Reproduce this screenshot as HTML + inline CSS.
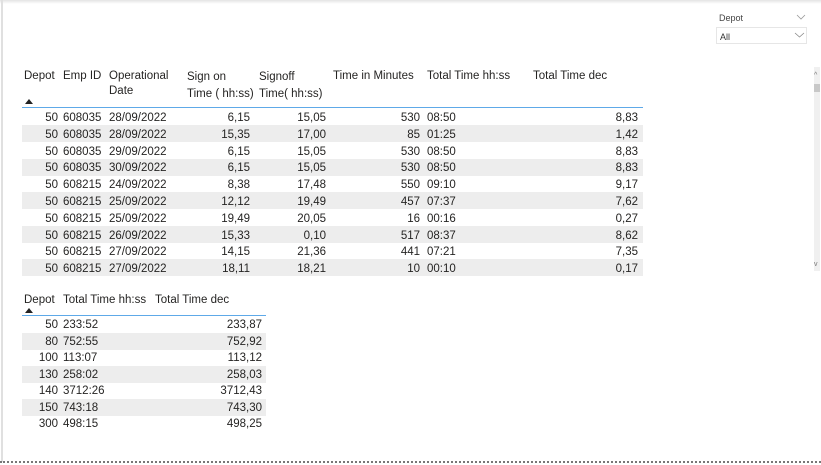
<!DOCTYPE html>
<html><head><meta charset="utf-8"><style>
*{margin:0;padding:0;box-sizing:border-box}
body{width:821px;height:465px;background:#fff;position:relative;overflow:hidden;font-family:"Segoe UI","Liberation Sans",sans-serif;font-size:11.5px;color:#252423}
.a{position:absolute;white-space:nowrap;line-height:14px}
.r{text-align:right}
.g{position:absolute;background:#ededed}
.tri{position:absolute;width:0;height:0;border-left:4px solid transparent;border-right:4px solid transparent;border-bottom:5px solid #222}
</style></head><body>
<div style="position:absolute;left:0;top:0;width:821px;height:4px;background:linear-gradient(#e4e4e4,#fff)"></div>
<div style="position:absolute;left:1px;top:0;width:2px;height:462px;background:#e0e0e0"></div>
<div style="position:absolute;left:0;top:461px;width:821px;height:0;border-top:2px dotted #777"></div>

<!-- slicer -->
<div class="a" style="left:719px;top:11px;font-size:9px;color:#444">Depot</div>
<svg style="position:absolute;left:796px;top:14px" width="10" height="6"><path d="M1 1L5 5L9 1" fill="none" stroke="#999" stroke-width="0.8"/></svg>
<div style="position:absolute;left:716px;top:27px;width:91px;height:17px;border:1px solid #e6e6e6"></div>
<div class="a" style="left:720px;top:30px;font-size:9px;color:#333">All</div>
<svg style="position:absolute;left:794px;top:32px" width="11" height="6"><path d="M1 1L5.5 5L10 1" fill="none" stroke="#888" stroke-width="0.8"/></svg>

<!-- scrollbar -->
<div style="position:absolute;left:814px;top:67px;width:6px;height:204px;background:#f0f0f0"></div>
<div style="position:absolute;left:814px;top:84px;width:6px;height:8px;background:#c8c8c8"></div>
<div class="a" style="left:814px;top:69px;font-size:7px;color:#777">^</div>
<div class="a" style="left:814px;top:258px;font-size:7px;color:#777">v</div>

<!-- table 1 header -->
<div class="a" style="left:24px;top:69px">Depot</div>
<div class="a" style="left:63px;top:69px">Emp ID</div>
<div class="a" style="left:109px;top:69px">Operational<br><span style="line-height:17px">Date</span></div>
<div class="a" style="left:187px;top:69px;line-height:17px">Sign on<br>Time ( hh:ss)</div>
<div class="a" style="left:259px;top:69px;line-height:17px">Signoff<br>Time( hh:ss)</div>
<div class="a" style="left:333px;top:69px">Time in Minutes</div>
<div class="a" style="left:427px;top:69px">Total Time hh:ss</div>
<div class="a" style="left:533px;top:69px">Total Time dec</div>
<div class="tri" style="left:25px;top:99px"></div>
<div style="position:absolute;left:22px;top:107px;width:621px;height:1px;background:#5ea9e8"></div>

<div class="g" style="left:22px;top:125px;width:621px;height:17px"></div>
<div class="g" style="left:22px;top:159px;width:621px;height:17px"></div>
<div class="g" style="left:22px;top:192px;width:621px;height:17px"></div>
<div class="g" style="left:22px;top:226px;width:621px;height:17px"></div>
<div class="g" style="left:22px;top:259px;width:621px;height:17px"></div>

<div class="a r" style="left:0;width:58px;top:110px;line-height:16.8px">50<br>50<br>50<br>50<br>50<br>50<br>50<br>50<br>50<br>50</div>
<div class="a" style="left:63px;top:110px;line-height:16.8px">608035<br>608035<br>608035<br>608035<br>608215<br>608215<br>608215<br>608215<br>608215<br>608215</div>
<div class="a" style="left:109px;top:110px;line-height:16.8px">28/09/2022<br>28/09/2022<br>29/09/2022<br>30/09/2022<br>24/09/2022<br>25/09/2022<br>25/09/2022<br>26/09/2022<br>27/09/2022<br>27/09/2022</div>
<div class="a r" style="left:180px;width:70px;top:110px;line-height:16.8px">6,15<br>15,35<br>6,15<br>6,15<br>8,38<br>12,12<br>19,49<br>15,33<br>14,15<br>18,11</div>
<div class="a r" style="left:256px;width:70px;top:110px;line-height:16.8px">15,05<br>17,00<br>15,05<br>15,05<br>17,48<br>19,49<br>20,05<br>0,10<br>21,36<br>18,21</div>
<div class="a r" style="left:350px;width:70px;top:110px;line-height:16.8px">530<br>85<br>530<br>530<br>550<br>457<br>16<br>517<br>441<br>10</div>
<div class="a" style="left:427px;top:110px;line-height:16.8px">08:50<br>01:25<br>08:50<br>08:50<br>09:10<br>07:37<br>00:16<br>08:37<br>07:21<br>00:10</div>
<div class="a r" style="left:560px;width:78px;top:110px;line-height:16.8px">8,83<br>1,42<br>8,83<br>8,83<br>9,17<br>7,62<br>0,27<br>8,62<br>7,35<br>0,17</div>

<!-- table 2 -->
<div class="a" style="left:24px;top:293px">Depot</div>
<div class="a" style="left:63px;top:293px">Total Time hh:ss</div>
<div class="a" style="left:155px;top:293px">Total Time dec</div>
<div class="tri" style="left:25px;top:308px"></div>
<div style="position:absolute;left:22px;top:315px;width:244px;height:1px;background:#5ea9e8"></div>
<div class="g" style="left:22px;top:333px;width:244px;height:17px"></div>
<div class="g" style="left:22px;top:366px;width:244px;height:17px"></div>
<div class="g" style="left:22px;top:399px;width:244px;height:17px"></div>
<div class="a r" style="left:0;width:58px;top:317px;line-height:16.5px">50<br>80<br>100<br>130<br>140<br>150<br>300</div>
<div class="a" style="left:63px;top:317px;line-height:16.5px">233:52<br>752:55<br>113:07<br>258:02<br>3712:26<br>743:18<br>498:15</div>
<div class="a r" style="left:180px;width:82px;top:317px;line-height:16.5px">233,87<br>752,92<br>113,12<br>258,03<br>3712,43<br>743,30<br>498,25</div>
</body></html>
